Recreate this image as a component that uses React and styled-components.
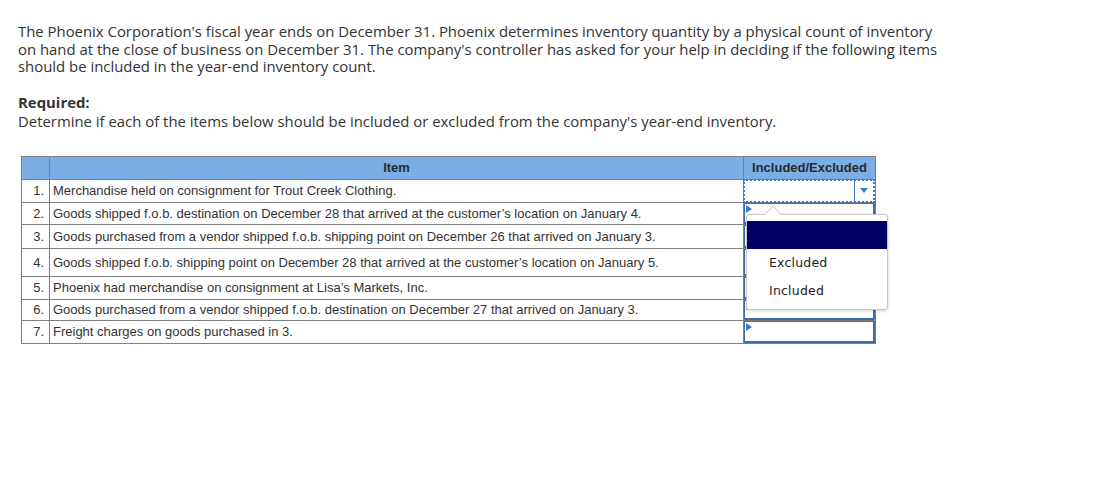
import React from "react";
import styled, { createGlobalStyle } from "styled-components";

const Global = createGlobalStyle`
  html, body { margin: 0; padding: 0; background: #fff; }
  body { font-family: "Open Sans", "Liberation Sans", sans-serif; }
`;

const Page = styled.div`
  padding: 23px 18px 0 18px;
  color: #333;
`;

const Para = styled.p`
  margin: 0;
  width: 1000px;
  font-family: "Open Sans", "Liberation Sans", sans-serif;
  font-size: 14.9px;
  line-height: 17.6px;
  color: #333;
`;

const Required = styled.div`
  margin-top: 17px;
  font-family: "Open Sans", "Liberation Sans", sans-serif;
  font-size: 14.9px;
  line-height: 19px;
  color: #333;
`;

const Bold = styled.div`
  font-weight: 700;
`;

const Table = styled.table`
  margin-top: 25px;
  margin-left: 3px;
  border-collapse: collapse;
  table-layout: fixed;
  width: 851px;
  font-family: "Liberation Sans", Arial, sans-serif;
  font-size: 13px;
  color: #333;
`;

const Th = styled.th`
  background: #7aaee4;
  border: 1px solid #7f7f7f;
  height: 22px;
  padding: 0;
  font-weight: 700;
  font-size: 13px;
  color: #2b2b2b;
  text-align: center;
  width: ${(p) => p.$w}px;
`;

const Tr = styled.tr`
  height: ${(p) => p.$h}px;
`;

const NumTd = styled.td`
  border: 1px solid #7f7f7f;
  text-align: right;
  padding: 0 5px 0 0;
  vertical-align: middle;
`;

const ItemTd = styled.td`
  border: 1px solid #7f7f7f;
  padding: 0 0 0 3px;
  vertical-align: middle;
  white-space: nowrap;
`;

const SelTd = styled.td`
  border: 1px solid #7f7f7f;
  padding: 0;
  position: relative;
`;

const SelBox = styled.div`
  position: absolute;
  inset: 0;
  border: 1px solid #3f6ba8;
  border-width: 1px 2px 2px 1px;
`;

const FocusBox = styled.div`
  position: absolute;
  inset: -1px 0 -1px -1px;
  border: 2px dotted #3b78c4;
  display: flex;
  justify-content: flex-end;
`;

const ArrowPart = styled.div`
  width: 18px;
  border-left: 1px solid #3b78c4;
  display: flex;
  align-items: center;
  justify-content: center;
`;

const DownArrow = styled.div`
  width: 0;
  height: 0;
  border-left: 4px solid transparent;
  border-right: 4px solid transparent;
  border-top: 5px solid #3b78c4;
`;

const Marker = styled.div`
  position: absolute;
  left: 1px;
  top: 1px;
  width: 0;
  height: 0;
  border-top: 4px solid transparent;
  border-bottom: 4px solid transparent;
  border-left: 6px solid #3b78c4;
`;

const Popup = styled.div`
  position: absolute;
  left: 1px;
  top: 33px;
  width: 142px;
  height: 96px;
  background: #fff;
  border: 1px solid #c8c8c8;
  border-radius: 3px;
  box-shadow: 0 1px 3px rgba(0, 0, 0, 0.18);
  z-index: 5;
  box-sizing: border-box;
  padding-top: 6px;
  font-family: "DejaVu Sans", "Noto Sans", sans-serif;
  font-size: 12.5px;
  color: #222;
  &::before {
    content: "";
    position: absolute;
    left: 20px;
    top: -7px;
    width: 11px;
    height: 11px;
    background: #fff;
    border-left: 1px solid #cfcfcf;
    border-top: 1px solid #cfcfcf;
    transform: rotate(45deg);
  }
`;

const Option = styled.div`
  position: relative;
  height: 28px;
  line-height: 28px;
  padding-left: 22px;
  background: ${(p) => (p.$selected ? "#000066" : "transparent")};
  letter-spacing: 0.2px;
`;

const rows = [
  { t: "Merchandise held on consignment for Trout Creek Clothing.", h: 23 },
  { t: "Goods shipped f.o.b. destination on December 28 that arrived at the customer\u2019s location on January 4.", h: 22 },
  { t: "Goods purchased from a vendor shipped f.o.b. shipping point on December 26 that arrived on January 3.", h: 24 },
  { t: "Goods shipped f.o.b. shipping point on December 28 that arrived at the customer\u2019s location on January 5.", h: 28 },
  { t: "Phoenix had merchandise on consignment at Lisa\u2019s Markets, Inc.", h: 23 },
  { t: "Goods purchased from a vendor shipped f.o.b. destination on December 27 that arrived on January 3.", h: 21 },
  { t: "Freight charges on goods purchased in 3.", h: 23 },
];

export default function App() {
  return (
    <Page>
      <Global />
      <Para>
        The Phoenix Corporation's fiscal year ends on December 31. Phoenix determines inventory quantity by a physical count of inventory
        <br />
        on hand at the close of business on December 31. The company's controller has asked for your help in deciding if the following items
        <br />
        should be included in the year-end inventory count.
      </Para>
      <Required>
        <Bold>Required:</Bold>
        <div>Determine if each of the items below should be included or excluded from the company's year-end inventory.</div>
      </Required>
      <Table>
        <thead>
          <tr>
            <Th $w={27}></Th>
            <Th $w={693}>Item</Th>
            <Th $w={131}>Included/Excluded</Th>
          </tr>
        </thead>
        <tbody>
          {rows.map((r, i) => (
            <Tr key={i} $h={r.h}>
              <NumTd>{i + 1}.</NumTd>
              <ItemTd>{r.t}</ItemTd>
              <SelTd>
                {i === 0 ? (
                  <FocusBox>
                    <ArrowPart>
                      <DownArrow />
                    </ArrowPart>
                    <Popup>
                      <Option $selected />
                      <Option>Excluded</Option>
                      <Option>Included</Option>
                    </Popup>
                  </FocusBox>
                ) : (
                  <SelBox>
                    <Marker />
                  </SelBox>
                )}
              </SelTd>
            </Tr>
          ))}
        </tbody>
      </Table>
    </Page>
  );
}
